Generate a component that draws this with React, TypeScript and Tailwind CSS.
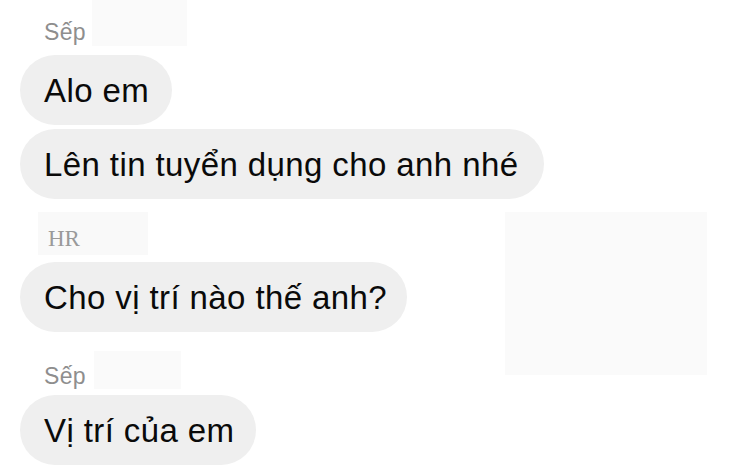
import React from "react";

const sans = { fontFamily: '"Liberation Sans", Arial, sans-serif' };

function Bubble({ text, w, className = "" }: { text: string; w: string; className?: string }) {
  return (
    <div
      className={`flex h-[70px] items-center rounded-full bg-[#efefef] pl-[24px] text-[33px] leading-none tracking-[0.4px] text-[#0a0a0a] ${w} ${className}`}
      style={sans}
    >
      <span className="whitespace-nowrap">{text}</span>
    </div>
  );
}

export default function App() {
  return (
    <div className="relative h-[474px] w-[735px] overflow-hidden bg-white" style={sans}>
      <div className="absolute left-[505px] top-[212px] h-[163px] w-[202px] bg-[#fafafa]" />
      <div className="relative flex flex-col pl-[20px]">
        {/* Sếp row */}
        <div className="flex h-[46px] items-stretch">
          <div className="flex items-end pb-[2px] pl-[24px] pr-[6px] text-[23px] leading-none tracking-[0.3px] text-[#8e8e8e]">Sếp</div>
          <div className="w-[95px] bg-[#fafafa]" />
        </div>
        <Bubble text="Alo em" w="w-[152px]" className="mt-[9px]" />
        <Bubble text="Lên tin tuyển dụng cho anh nhé" w="w-[524px]" className="mt-[4px]" />
        {/* HR row */}
        <div className="mt-[13px] flex h-[43px] pl-[18px]">
          <div
            className="flex w-[110px] items-end bg-[#f9f9f9] pb-[5px] pl-[10px] text-[23px] leading-none text-[#9a9a9a]"
            style={{ fontFamily: '"Liberation Serif", "Times New Roman", serif' }}
          >
            HR
          </div>
        </div>
        <Bubble text="Cho vị trí nào thế anh?" w="w-[387px]" className="mt-[7px]" />
        {/* Sếp row 2 */}
        <div className="mt-[19px] flex h-[38px] items-stretch">
          <div className="flex items-end pb-[1px] pl-[24px] pr-[8px] text-[23px] leading-none tracking-[0.3px] text-[#8e8e8e]">Sếp</div>
          <div className="w-[87px] bg-[#fafafa]" />
        </div>
        <Bubble text="Vị trí của em" w="w-[236px]" className="mt-[6px]" />
      </div>
    </div>
  );
}
